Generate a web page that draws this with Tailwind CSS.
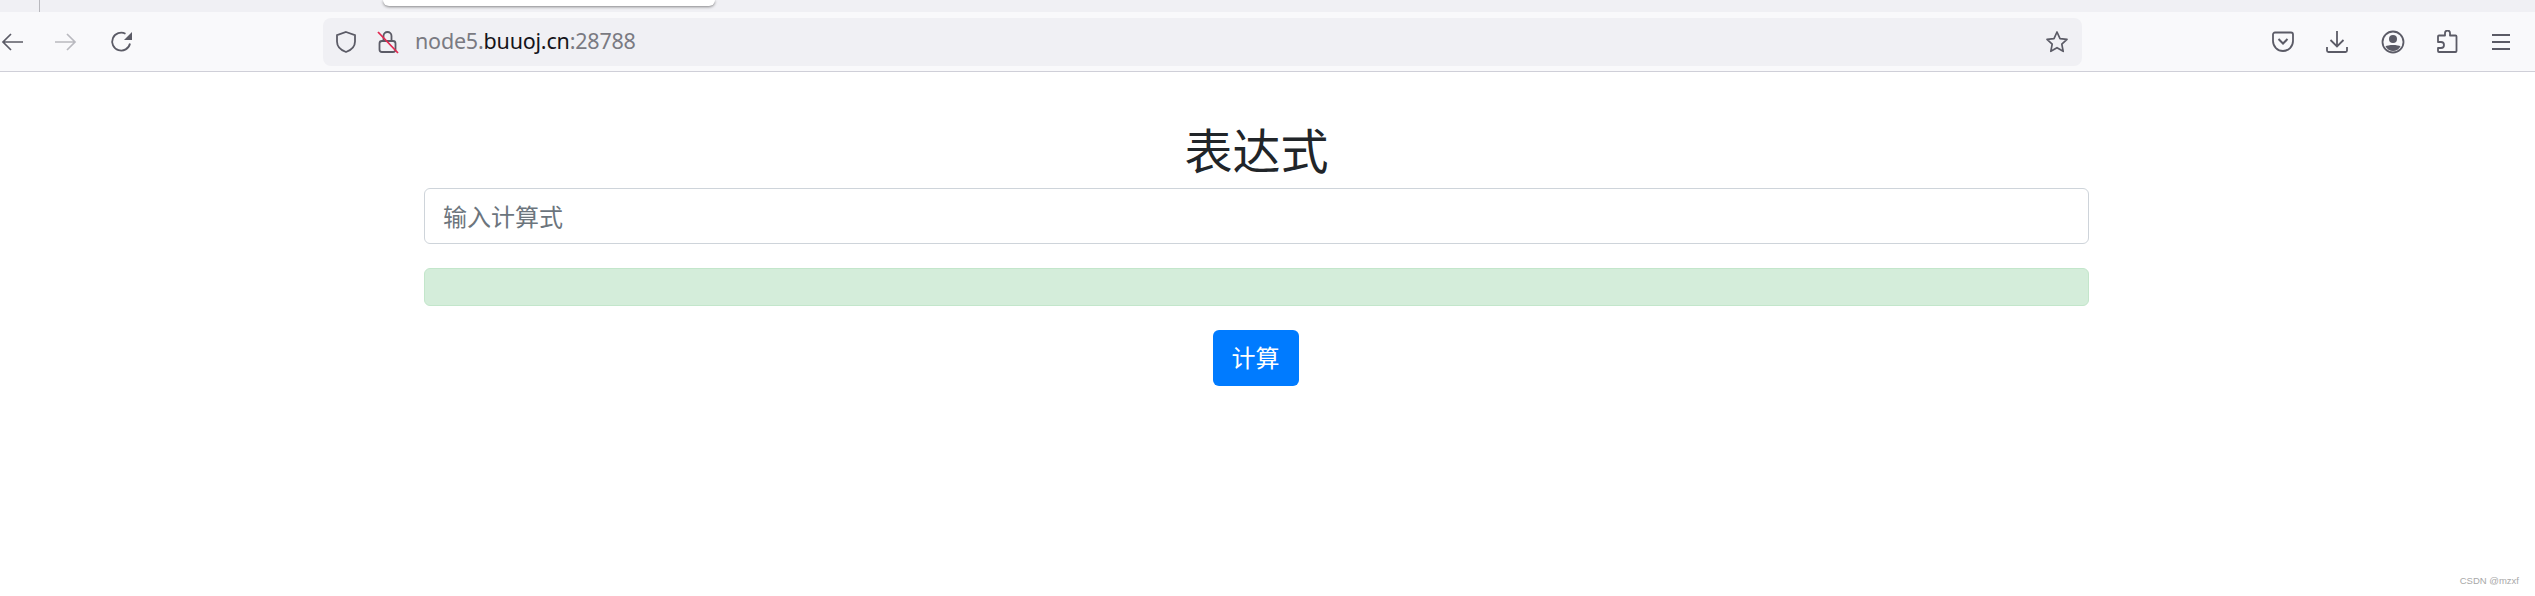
<!DOCTYPE html>
<html lang="zh-CN">
<head>
    <meta charset="UTF-8">
    <title>表达式</title>
    <script src="https://cdn.jsdelivr.net/npm/@tailwindcss/browser@4"></script>
</head>
<body class="relative h-[596px] overflow-hidden bg-white font-['Noto_Sans','Noto_Sans_CJK_SC',sans-serif]">
    <!-- Tab strip -->
    <div class="flex h-3 bg-[#f0f0f4]">
        <div class="ml-[39px] h-3 w-px bg-[#b8b8bd]"></div>
        <div class="ml-[343px] h-[6px] w-[332px] rounded-b-lg bg-white shadow-[0_1px_3px_rgba(0,0,0,0.45)]"></div>
    </div>

    <!-- Toolbar -->
    <div class="flex h-[60px] items-center border-b border-[#cfcfd8] bg-[#f9f9fb] text-[#5b5b66]">
        <div class="ml-[-15px] flex w-[54px] justify-center">
            <svg class="h-6 w-6" viewBox="0 0 24 24" fill="none" stroke="currentColor" stroke-width="1.7"><path d="M23 12H3M11 4l-8 8 8 8"/></svg>
        </div>
        <div class="flex w-[54px] justify-center text-[#b9b9bf]">
            <svg class="h-6 w-6" viewBox="0 0 24 24" fill="none" stroke="currentColor" stroke-width="1.7"><path d="M1 12h20M13 4l8 8-8 8"/></svg>
        </div>
        <div class="flex w-[54px] justify-center pl-[3px]">
            <svg class="h-6 w-6" viewBox="0 0 24 24" fill="none" stroke="currentColor" stroke-width="1.8"><path d="M20 13.5A9 9 0 1 1 15.5 3.7"/><path d="M22 2v8h-8z" fill="currentColor" stroke="none"/></svg>
        </div>

        <!-- URL bar -->
        <div class="ml-[176px] flex h-12 w-[1759px] items-center rounded-lg bg-[#f0f0f4]">
            <svg class="ml-[11px] h-6 w-6" viewBox="0 0 24 24" fill="none" stroke="currentColor" stroke-width="1.8"><path d="M12 2 21 5.2v6.300c0 5-3.600 8.600-9 10.500-5.400-1.900-9-5.500-9-10.500V5.200z"/></svg>
            <svg class="ml-[18px] h-6 w-6" viewBox="0 0 24 24" fill="none"><rect x="3.500" y="11" width="16" height="11" rx="2.500" stroke="#5b5b66" stroke-width="1.800"/><path d="M7.500 11V6a4 4 0 0 1 8 0V11" stroke="#5b5b66" stroke-width="1.800"/><path d="M2 2l20 21" stroke="#e22850" stroke-width="1.800"/></svg>
            <div class="ml-[15px] text-[21.5px] tracking-[-0.2px] text-[#7a7a82]">node5.<span class="text-[#15141a]">buuoj.cn</span>:28788</div>
            <svg class="ml-auto mr-[13px] h-6 w-6" viewBox="0 0 24 24" fill="none" stroke="currentColor" stroke-width="1.700" stroke-linejoin="round"><path d="m12 2 3 6.600 7 .800-5.200 4.800 1.400 7.100L12 17.700l-6.200 3.600 1.400-7.100L2 9.400l7-.800z"/></svg>
        </div>

        <!-- Right side buttons -->
        <div class="ml-[174px] flex w-[54px] justify-center">
            <svg class="h-6 w-6" viewBox="0 0 24 24" fill="none" stroke="currentColor" stroke-width="1.800"><path d="M4 2.500h16A2 2 0 0 1 22 4.500V11a10 10 0 0 1-20 0V4.500a2 2 0 0 1 2-2z"/><path d="m7.500 9 4.500 4.500L16.500 9" stroke-width="2"/></svg>
        </div>
        <div class="flex w-[54px] justify-center">
            <svg class="h-6 w-6" viewBox="0 0 24 24" fill="none" stroke="currentColor" stroke-width="1.800"><path d="M12 1v15M5.500 10l6.500 6.500 6.500-6.500M2 17v3.500A1.500 1.500 0 0 0 3.500 22h17a1.500 1.500 0 0 0 1.500-1.500V17"/></svg>
        </div>
        <div class="ml-[2px] flex w-[54px] justify-center">
            <svg class="h-6 w-6" viewBox="0 0 24 24" fill="none" stroke="currentColor" stroke-width="1.800"><circle cx="12" cy="12" r="10.500"/><circle cx="12" cy="9" r="4" fill="currentColor" stroke="none"/><path d="M4.500 16.500c2-2 13-2 15 0-2 3-4.500 4.500-7.500 4.500s-5.500-1.500-7.500-4.500z" fill="currentColor" stroke="none"/></svg>
        </div>
        <div class="flex w-[54px] justify-center">
            <svg class="h-6 w-6" viewBox="0 0 24 24" fill="none" stroke="currentColor" stroke-width="1.800" stroke-linejoin="round"><path d="M10 6.500V4a2.500 2.500 0 0 1 5 0v2.500h5.500a1 1 0 0 1 1 1V22a1 1 0 0 1-1 1H4a1 1 0 0 1-1-1v-3h3a3 3 0 0 0 0-6H3V7.500a1 1 0 0 1 1-1z" transform="translate(0 -1)"/></svg>
        </div>
        <div class="flex w-[54px] justify-center">
            <svg class="h-6 w-6" viewBox="0 0 24 24" fill="none" stroke="currentColor" stroke-width="1.900"><path d="M3 5h18M3 12h18M3 19h18"/></svg>
        </div>
    </div>

    <!-- Page -->
    <main class="ml-[424px] flex w-[1665px] flex-col items-center pt-[43px]">
        <h1 class="h-[73px] text-[48px] leading-[72px] font-normal text-[#212529]">表达式</h1>
        <input type="text" placeholder="输入计算式" class="h-[56px] w-full rounded-md border border-[#ced4da] bg-white px-[18px] text-[24px] placeholder:text-[#6c757d]">
        <div class="mt-6 h-[38px] w-full rounded-md border border-[#c3e6cb] bg-[#d4edda]"></div>
        <button class="mt-6 mr-[2px] h-[56px] w-[86px] rounded-md bg-[#007bff] text-[24px] text-white">计算</button>
    </main>

    <div class="absolute right-[16px] bottom-[8px] font-['Liberation_Sans',sans-serif] text-[9.5px] text-[#a8a8a8]">CSDN @mzxf</div>
</body>
</html>
